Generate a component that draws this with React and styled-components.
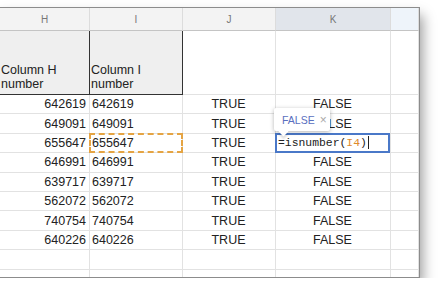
import React from "react";
import styled, { createGlobalStyle } from "styled-components";

const GlobalStyle = createGlobalStyle`
	body {
		margin: 0;
		background: #fff;
		font-family: "Liberation Sans", Arial, sans-serif;
	}
`;

const Frame = styled.div`
	box-sizing: border-box;
	margin: 7px 0 0 -1px;
	width: 421px;
	height: 271px;
	border: 1px solid #8c8c8c;
	overflow: hidden;
	box-shadow: 3px 8px 12px rgba(0, 0, 0, 0.38);
	background: #fff;
`;

const Grid = styled.div`
	display: grid;
	grid-template-columns: 90px 93px 93px 115px 28px;
	grid-template-rows: 23px 64px;
	grid-auto-rows: 19.4px;
`;

const ColHead = styled.div`
	box-sizing: border-box;
	display: flex;
	align-items: center;
	justify-content: center;
	background: ${(p) => p.$bg || "#f3f3f3"};
	border-right: 1px solid #dcdcdc;
	border-bottom: 1px solid #c4c4c4;
	color: #777;
	font-size: 10px;
`;

const TitleCell = styled.div`
	box-sizing: border-box;
	display: flex;
	align-items: flex-end;
	padding: 0 2px 3px 1px;
	font-size: 12.5px;
	line-height: 14px;
	color: #222;
	background: ${(p) => (p.$filled ? "#efefef" : "#fff")};
	border-right: 1px solid ${(p) => (p.$filled ? "#333" : "#e2e2e2")};
	border-bottom: 1px solid ${(p) => (p.$filled ? "#333" : "#e2e2e2")};
`;

const Cell = styled.div`
	box-sizing: border-box;
	position: relative;
	display: flex;
	align-items: center;
	justify-content: ${(p) =>
		p.$align === "right" ? "flex-end" : p.$align === "center" ? "center" : "flex-start"};
	padding: 0 3px 0 2px;
	font-size: 12.5px;
	color: #222;
	white-space: nowrap;
	border-right: 1px solid #e2e2e2;
	border-bottom: 1px solid #e2e2e2;

	${(p) =>
		p.$copied &&
		`
		&::after {
			content: "";
			position: absolute;
			inset: -1px -1px -1px -1px;
			border: 2px dashed #e5a443;
		}
	`}
`;

const Editor = styled.div`
	position: absolute;
	inset: -1px 0 -1px -1px;
	box-sizing: border-box;
	border: 2px solid #4a78c8;
	background: #fff;
	display: flex;
	align-items: center;
	padding-left: 1px;
	font-family: "Liberation Mono", "Courier New", monospace;
	font-size: 11.4px;
	color: #222;
	z-index: 2;
`;

const Ref = styled.span`
	color: #e08a2c;
`;

const Caret = styled.span`
	display: inline-block;
	width: 1px;
	height: 13px;
	background: #222;
	margin-left: 1px;
`;

const Tip = styled.div`
	position: absolute;
	left: -3px;
	bottom: 20px;
	width: 56px;
	height: 23px;
	box-sizing: border-box;
	display: flex;
	align-items: center;
	gap: 5px;
	padding-left: 8px;
	background: #fff;
	border-radius: 2px;
	box-shadow: 0 1px 4px rgba(0, 0, 0, 0.3);
	font-family: "Liberation Sans", Arial, sans-serif;
	font-size: 10.5px;
	color: #5a6fc0;
	z-index: 3;

	&::after {
		content: "";
		position: absolute;
		left: 6px;
		bottom: -4px;
		width: 7px;
		height: 7px;
		background: #fff;
		transform: rotate(45deg);
		box-shadow: 2px 2px 2px rgba(0, 0, 0, 0.12);
	}
`;

const Close = styled.span`
	color: #aaa;
	font-size: 12px;
`;

const rows = [642619, 649091, 655647, 646991, 639717, 562072, 740754, 640226];

export default function App() {
	return (
		<>
			<GlobalStyle />
			<Frame>
				<Grid>
					<ColHead>H</ColHead>
					<ColHead>I</ColHead>
					<ColHead>J</ColHead>
					<ColHead $bg="#e1e5eb">K</ColHead>
					<ColHead $bg="#eef4fa" />

					<TitleCell $filled>Column H number</TitleCell>
					<TitleCell $filled>Column I number</TitleCell>
					<TitleCell />
					<TitleCell />
					<TitleCell />

					{rows.map((n, i) => (
						<React.Fragment key={n}>
							<Cell $align="right">{n}</Cell>
							<Cell $copied={i === 2}>{n}</Cell>
							<Cell $align="center">TRUE</Cell>
							{i === 2 ? (
								<Cell>
									<Editor>
										<Tip>
											FALSE <Close>×</Close>
										</Tip>
										=isnumber(<Ref>I4</Ref>)<Caret />
									</Editor>
								</Cell>
							) : (
								<Cell $align="center">FALSE</Cell>
							)}
							<Cell />
						</React.Fragment>
					))}
					{[0, 1, 2].map((r) => (
						<React.Fragment key={r}>
							<Cell />
							<Cell />
							<Cell />
							<Cell />
							<Cell />
						</React.Fragment>
					))}
				</Grid>
			</Frame>
		</>
	);
}
